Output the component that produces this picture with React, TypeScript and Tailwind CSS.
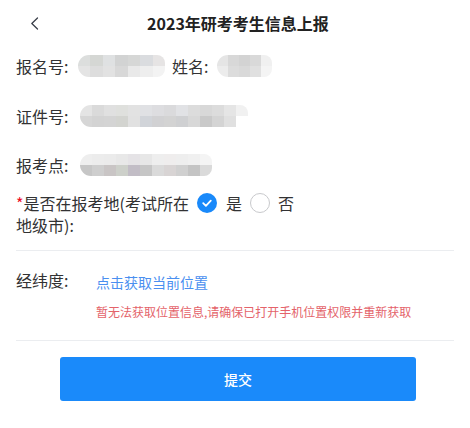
const PILL_1 = [
  ['#dcdedd', '#d5d7d4', '#dfe1e2', '#d2d3d3', '#d6d7d6', '#dadcdf', '#e6e4e4'],
  ['#e4e4e4', '#dddddd', '#e2e2e2', '#d8d8d8', '#e9e9e9', '#eeeeee', '#f3f3f3'],
];
const PILL_2 = [
  ['#e5e5e5', '#d8d8d8', '#d3d3d3', '#d9d9d9', '#f0f0f0'],
  ['#ececec', '#dcdcdc', '#d9d9d9', '#e0e0e0', '#f4f4f4'],
];
const PILL_3 = [
  ['#e4e4e4', '#dadada', '#e0e0e0', '#dfe0dd', '#e2e2e2', '#e0e1e4', '#dddde0', '#dadadc', '#e1e2e5', '#dcdcdc', '#d8d8d8', '#dcdcdc', '#e5e5e5', '#f1f1f1'],
  ['#d6d6d6', '#d3d3d3', '#d4d4d4', '#d3d4d0', '#e1e1e1', '#d1d4d9', '#d1d1d3', '#d3d3d3', '#cfd0d2', '#d8d8d8', '#c9c9c9', '#d4d4d4', '#e0e0e0', '#ffffff'],
];
const PILL_4 = [
  ['#eeeeee', '#ececec', '#ebebeb', '#e8e8e8', '#e5e3e6', '#e7e7e7', '#eeeeee', '#efeded', '#eeeeee', '#f0f0f0', '#f4f4f4'],
  ['#c6c6c6', '#cecece', '#c9c5c5', '#cdd0ca', '#c2bdc6', '#c6c6c6', '#dadada', '#d8d4d4', '#d0d0d0', '#c4c4c4', '#dadada'],
];

// pixelated "blurred" value, the way the screenshot masks personal data
function Masked({ cells, width }: { cells: string[][]; width: number }) {
  return (
    <div className="flex flex-col h-[22px] rounded-l-[11px] rounded-r-[8px] overflow-hidden shrink-0" style={{ width }}>
      {cells.map((row, i) => (
        <div key={i} className="flex flex-1">
          {row.map((c, j) => (
            <div key={j} className="flex-1" style={{ backgroundColor: c }} />
          ))}
        </div>
      ))}
    </div>
  );
}

export default function App() {
  return (
    <div className="w-[470px] h-[428px] bg-white text-[#323233] font-['Noto_Sans_CJK_SC','Noto_Sans',sans-serif]">
      <div className="h-[46px] flex items-center px-[26px]">
        <div className="w-[24px] flex items-center pl-[4px]">
          <svg width="9" height="13" viewBox="0 0 9 13" fill="none">
            <path d="M7.5 1 L1.8 6.5 L7.5 12" stroke="#3a3f4a" strokeWidth="1.3" strokeLinecap="round" strokeLinejoin="round" />
          </svg>
        </div>
        <div className="flex-1 text-center text-[16px] font-bold text-[#222]">2023年研考考生信息上报</div>
        <div className="w-[18px]" />
      </div>

      <div className="px-[16px]">
        <div className="mt-[9px] flex items-center h-[22px] text-[16px]">
          <span className="w-[62px]">报名号:</span>
          <Masked cells={PILL_1} width={87} />
          <span className="ml-[7px] w-[45px]">姓名:</span>
          <Masked cells={PILL_2} width={55} />
        </div>

        <div className="mt-[28px] flex items-center h-[22px] text-[16px]">
          <span className="w-[64px]">证件号:</span>
          <Masked cells={PILL_3} width={168} />
        </div>

        <div className="mt-[27px] flex items-center h-[22px] text-[16px]">
          <span className="w-[64px]">报考点:</span>
          <Masked cells={PILL_4} width={132} />
        </div>

        <div className="mt-[16px] flex items-start text-[16px] leading-[22px]">
          <div className="w-[181px]">
            <span className="text-[#ee0a24]">*</span>是否在报考地(考试所在
            <br />
            地级市):
          </div>
          <div className="flex items-center h-[22px]">
            <span className="w-[20px] h-[20px] rounded-full bg-[#1989fa] flex items-center justify-center">
              <svg width="12" height="12" viewBox="0 0 12 12" fill="none">
                <path d="M2.2 6.2 L4.9 8.8 L9.8 3.6" stroke="#fff" strokeWidth="1.8" strokeLinecap="round" strokeLinejoin="round" />
              </svg>
            </span>
            <span className="ml-[9px]">是</span>
            <span className="ml-[8px] w-[20px] h-[20px] rounded-full border border-[#c8c9cc]" />
            <span className="ml-[8px]">否</span>
          </div>
        </div>

        <div className="mt-[14px] h-px bg-[#ebedf0]" />

        <div className="mt-[18px] flex items-start">
          <span className="w-[80px] text-[16px] leading-[22px]">经纬度:</span>
          <div className="flex flex-col">
            <span className="text-[14px] leading-[22px] mt-[2px] text-[#4a8ff0]">点击获取当前位置</span>
            <span className="mt-[10px] text-[12px] leading-[18px] text-[#e4636a]">暂无法获取位置信息,请确保已打开手机位置权限并重新获取</span>
          </div>
        </div>

        <div className="mt-[19px] h-px bg-[#ebedf0]" />

        <div className="mt-[16px] pl-[44px] pr-[38px]">
          <button type="button" className="w-full h-[44px] rounded-[3px] bg-[#1a8afa] text-white text-[14px] font-medium">
            提交
          </button>
        </div>
      </div>
    </div>
  );
}
